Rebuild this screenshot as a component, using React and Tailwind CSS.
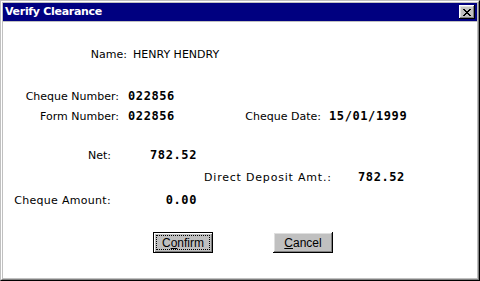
import React from "react";

const sans = { fontFamily: '"DejaVu Sans", sans-serif' };

function CloseX() {
  const px = [
    [0, 0], [1, 0], [6, 0], [7, 0],
    [1, 1], [2, 1], [5, 1], [6, 1],
    [2, 2], [3, 2], [4, 2], [5, 2],
    [3, 3], [4, 3],
    [2, 4], [3, 4], [4, 4], [5, 4],
    [1, 5], [2, 5], [5, 5], [6, 5],
    [0, 6], [1, 6], [6, 6], [7, 6],
  ];
  return (
    <svg width="8" height="7" viewBox="0 0 8 7" shapeRendering="crispEdges">
      {px.map(([x, y], i) => (
        <rect key={i} x={x} y={y} width="1" height="1" fill="#000" />
      ))}
    </svg>
  );
}

function Val({ children, className = "" }) {
  return (
    <span
      className={"font-['DejaVu_Sans_Mono',monospace] font-bold text-[12px] tracking-[0.6px] " + className}
    >
      {children}
    </span>
  );
}

export default function App() {
  return (
    <div className="w-[480px] h-[281px] border border-t-[#c0c0c0] border-l-[#c0c0c0] border-r-black border-b-black bg-[#c0c0c0]">
      <div className="h-full border border-t-white border-l-white border-r-[#808080] border-b-[#808080] p-px flex flex-col">
        <div className="h-[18px] bg-[#000080] flex items-center justify-between pl-[2px] pr-[2px]">
          <span className="text-white font-bold text-[11px] leading-[18px] font-['DejaVu_Sans',sans-serif] tracking-[-0.3px]">
            Verify Clearance
          </span>
          <div className="w-[16px] h-[14px] bg-[#c0c0c0] flex items-center justify-center shadow-[inset_-1px_-1px_0_#000,inset_1px_1px_0_#fff,inset_-2px_-2px_0_#808080,inset_2px_2px_0_#dfdfdf]">
            <CloseX />
          </div>
        </div>
        <div className="mt-px flex-1 bg-white flex flex-col text-[11px] text-black leading-[13px]" style={sans}>
          <div className="mt-[24px] h-[16px] flex items-center">
            <span className="w-[124px] text-right">Name:</span>
            <span className="ml-[6px]">HENRY HENDRY</span>
          </div>
          <div className="mt-[26px] h-[16px] flex items-center">
            <span className="w-[116px] text-right">Cheque Number:</span>
            <Val className="ml-[9px]">022856</Val>
          </div>
          <div className="mt-[4px] h-[16px] flex items-center">
            <span className="w-[116px] text-right">Form Number:</span>
            <Val className="ml-[9px] w-[60px]">022856</Val>
            <span className="w-[133px] text-right">Cheque Date:</span>
            <Val className="ml-[8px]">15/01/1999</Val>
          </div>
          <div className="mt-[23px] h-[16px] flex items-center">
            <span className="w-[108px] text-right">Net:</span>
            <Val className="w-[86px] text-right">782.52</Val>
          </div>
          <div className="mt-[6px] h-[16px] flex items-center">
            <span className="ml-[201px] w-[154px] tracking-[0.8px]">Direct Deposit Amt.:</span>
            <Val>782.52</Val>
          </div>
          <div className="mt-[7px] h-[16px] flex items-center">
            <span className="w-[108px] text-right tracking-[0.3px]">Cheque Amount:</span>
            <Val className="w-[86px] text-right">0.00</Val>
          </div>
          <div className="mt-[24px] flex items-start font-['Liberation_Sans',sans-serif] text-[12px]">
            <div className="ml-[150px] w-[60px] h-[21px] bg-[#c0c0c0] border border-black p-[2px] shadow-[inset_1px_1px_0_#fff,inset_-1px_-1px_0_#808080]">
              <div className="w-full h-full border border-dotted border-black flex items-center justify-center leading-none">
                <span>C<span className="underline">o</span>nfirm</span>
              </div>
            </div>
            <div className="ml-[60px] w-[60px] h-[21px] bg-[#c0c0c0] flex items-center justify-center leading-none shadow-[inset_-1px_-1px_0_#000,inset_1px_1px_0_#fff,inset_-2px_-2px_0_#808080,inset_2px_2px_0_#dfdfdf]">
              <span><span className="underline">C</span>ancel</span>
            </div>
          </div>
        </div>
      </div>
    </div>
  );
}
